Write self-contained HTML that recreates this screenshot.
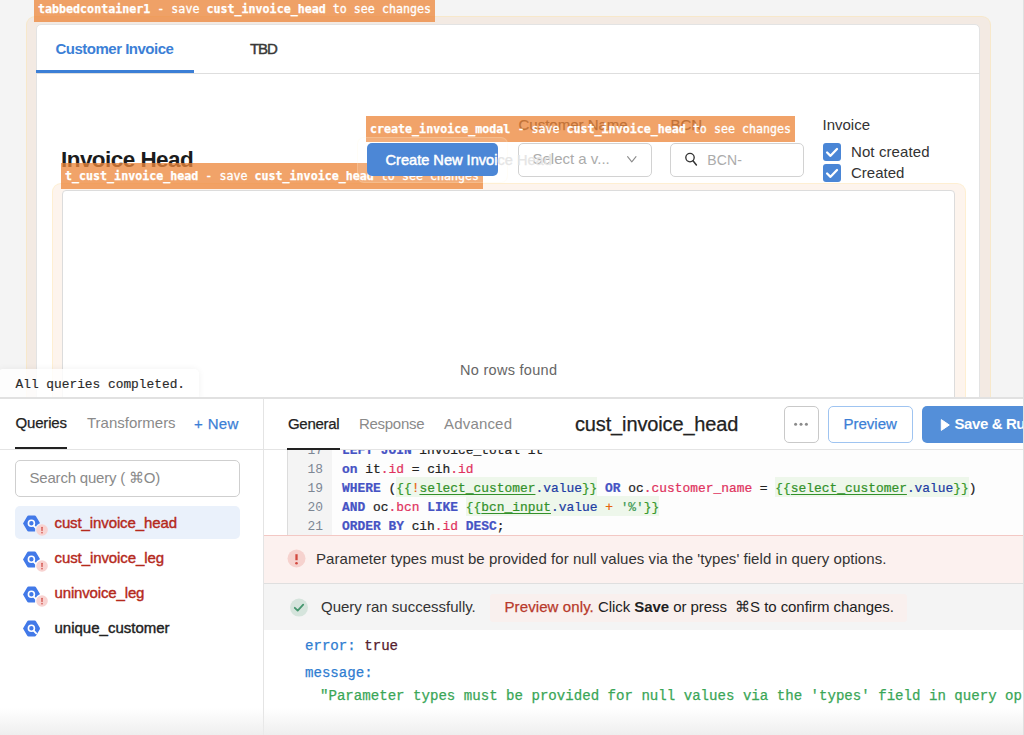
<!DOCTYPE html>
<html lang="en">
<head>
<meta charset="utf-8">
<title>Retool - Customer Invoice</title>
<style>
*{box-sizing:border-box;margin:0;padding:0}
html,body{width:1024px;height:735px;overflow:hidden;background:#f4f4f4;font-family:"Liberation Sans",Arial,sans-serif;font-size:15px;color:#333}
.abs{position:absolute}
.t{position:absolute;white-space:pre;line-height:20px}
.med2{-webkit-text-stroke:.4px currentColor}
.med{-webkit-text-stroke:0.25px currentColor}
.mono{font-family:"Liberation Mono","DejaVu Sans Mono",monospace}

/* canvas */
#canvas{position:absolute;left:0;top:0;width:1024px;height:398px;overflow:hidden;background:#f4f4f4}
.halo{position:absolute;background:rgba(237,137,54,.09);border:1.5px solid rgba(255,225,140,.28);border-radius:9px}
#tc{position:absolute;left:36px;top:24px;width:944px;height:420px;background:#fff;border:1px solid #e3e3e3;border-radius:5px}
#tabline{position:absolute;left:36px;top:73px;width:944px;height:1px;background:#dedede}
#tabul{position:absolute;left:36px;top:70px;width:158px;height:3px;background:#3c7fd6}
.olabel{position:absolute;height:25px;background:rgba(237,135,60,.77);color:#fff;font-family:"DejaVu Sans Mono","Liberation Mono",monospace;font-size:11.66px;line-height:26px;padding:0 4px;white-space:pre}
.olabel b{font-weight:700;-webkit-text-stroke:.25px #fff}
.olabel span{-webkit-text-stroke:.3px #fff}
#table{position:absolute;left:62px;top:190px;width:893px;height:240px;background:#fff;border:1px solid #dcdcdc;border-radius:4px}
.field{position:absolute;top:142.5px;height:34.3px;background:#fff;border:1px solid #d2d2d2;border-radius:5px}
.cb{position:absolute;left:823px;width:18px;height:18px;border-radius:3px;background:#4a86d6}
.cb svg{position:absolute;left:0;top:0}
#btn{position:absolute;left:367px;top:143px;width:131px;height:33px;border-radius:5px;background:#4c87d6;overflow:hidden}
#status{position:absolute;left:-2px;top:368.5px;width:200.5px;height:30px;background:rgba(255,255,255,.82);border-radius:5px 5px 0 0;box-shadow:0 0 7px rgba(0,0,0,.06)}

/* bottom panel */
#panel{position:absolute;left:0;top:398px;width:1024px;height:337px;background:#fff;overflow:hidden}
#left{position:absolute;left:0;top:0;width:264px;height:338px;border-right:1px solid #e4e4e4}
.hline{position:absolute;height:1px;background:#e4e4e4}
.ul{position:absolute;height:2.6px;background:#222}
.hbtn{position:absolute;top:8px;height:37px;border-radius:5px;background:#fff}
.qi{position:absolute;left:0;width:263px;height:35px}
.qi svg{position:absolute;left:20px;top:5.2px}
.qi .t{left:54.5px;top:6.5px}
.red{color:#b5291c}
#code{position:absolute;left:287px;top:52px;width:737px;height:86px;background:#fdfdfd;overflow:hidden}
#gutter{position:absolute;left:0;top:0;width:45px;height:100px;background:#f4f4f4}
.cl{position:absolute;left:0;height:19px;line-height:19px;font-family:"Liberation Mono","DejaVu Sans Mono",monospace;font-size:12.9px;white-space:pre;color:#222;-webkit-text-stroke:.22px currentColor}
.cl .n{position:absolute;left:0;width:36px;text-align:right;color:#7d8794;-webkit-text-stroke:0}
.cl .c{position:absolute;left:55px}
.k{color:#4653c4;font-weight:700}
.p{color:#e0335e}
.g{color:#3a9a2d}
.v{color:#33912a;text-decoration:underline;text-decoration-thickness:1.3px;text-underline-offset:2.3px;text-decoration-skip-ink:none}
.b{color:#1d3ca3}
.o{color:#e8640c}
.s{color:#3d9a55}
.hl{background:#eef7eb;padding:4px 0 1px}
#err{position:absolute;left:264px;top:137px;width:760px;height:48px;background:#fcf1ef;border-top:1px solid #f3c8c4}
#ok{position:absolute;left:264px;top:185px;width:760px;height:47px;background:#f4f4f4;border-top:1px solid #dfdfdf}
#pv{position:absolute;left:226.3px;top:9.5px;width:417px;height:28px;background:#f9f0ee;border-radius:3px}
.out{position:absolute;font-family:"Liberation Mono","DejaVu Sans Mono",monospace;font-size:14.1px;line-height:20px;white-space:pre;-webkit-text-stroke:.25px currentColor}
#fade{position:absolute;left:0;top:310px;width:1024px;height:28px;background:linear-gradient(to bottom,rgba(236,236,236,0),rgba(236,236,236,.9))}
#redge{position:absolute;left:1022.6px;top:0;width:1.4px;height:735px;background:#e0e0e0}
</style>
</head>
<body>
<div id="canvas">
  <!-- tabbed container -->
  <div class="halo" style="left:25.5px;top:16px;width:965.5px;height:440px"></div>
  <div id="tc"></div>
  <div id="tabline"></div>
  <div id="tabul"></div>
  <div class="t" style="left:55.5px;top:38.8px;color:#3c7fd6;font-weight:700;letter-spacing:-.5px">Customer Invoice</div>
  <div class="t" style="left:250px;top:38.8px;color:#383838;letter-spacing:-1.1px;-webkit-text-stroke:.45px #383838">TBD</div>

  <div class="t" style="left:61px;top:145.5px;font-size:22.5px;font-weight:700;color:#1c1c1c;line-height:28px;letter-spacing:-.55px">Invoice Head</div>

  <!-- table -->
  <div class="halo" style="left:51.5px;top:183px;width:914.5px;height:260px"></div>
  <div id="table"></div>
  <div class="t" style="left:460px;top:359.5px;font-size:14.5px;color:#666;letter-spacing:.29px">No rows found</div>

  <!-- labels of fields -->
  <div class="t" style="left:518.5px;top:114.8px;color:#2e2e2e;-webkit-text-stroke:.25px #2e2e2e">Customer Name</div>
  <div class="t" style="left:670.5px;top:114.8px;color:#2e2e2e;-webkit-text-stroke:.25px #2e2e2e">BCN</div>
  <div class="t" style="left:822.5px;top:114.5px;color:#333">Invoice</div>

  <!-- select -->
  <div class="field" style="left:518px;width:133.5px"></div>
  <div class="t" style="left:532.5px;top:148.7px;color:#ababab">Select a v...</div>
  <svg class="abs" style="left:625px;top:153px" width="14" height="12" viewBox="0 0 14 12"><path d="M2.6 3.7 L6.8 8.9 L11 3.7" fill="none" stroke="#8c8c8c" stroke-width="1.1" stroke-linecap="round" stroke-linejoin="round"/></svg>

  <!-- input -->
  <div class="field" style="left:670px;width:133.5px"></div>
  <svg class="abs" style="left:683px;top:152px" width="16" height="16" viewBox="0 0 16 16"><circle cx="7" cy="5.6" r="4.2" fill="none" stroke="#333" stroke-width="1.35"/><path d="M10 8.8 L13.4 13" stroke="#333" stroke-width="1.5" stroke-linecap="round"/></svg>
  <div class="t" style="left:707.3px;top:150.1px;color:#ababab;font-size:14px;letter-spacing:.15px">BCN-</div>

  <!-- checkboxes -->
  <div class="cb" style="top:143px"><svg width="18" height="18" viewBox="0 0 18 18"><path d="M4.1 9.5 L7.5 12.8 L14 6" fill="none" stroke="#fff" stroke-width="2.3" stroke-linecap="round" stroke-linejoin="round"/></svg></div>
  <div class="cb" style="top:164px"><svg width="18" height="18" viewBox="0 0 18 18"><path d="M4.1 9.5 L7.5 12.8 L14 6" fill="none" stroke="#fff" stroke-width="2.3" stroke-linecap="round" stroke-linejoin="round"/></svg></div>
  <div class="t" style="left:851px;top:142px;color:#333;letter-spacing:.1px">Not created</div>
  <div class="t" style="left:851px;top:163px;color:#333">Created</div>

  <!-- orange labels -->
  <div class="olabel" style="left:34px;top:-4px;height:26px"><b>tabbedcontainer1</b><span> - save </span><b>cust_invoice_head</b><span> to see changes</span></div>
  <div class="olabel" style="left:61px;top:163px;height:25.6px"><b>t_cust_invoice_head</b><span> - save </span><b>cust_invoice_head</b><span> to see changes</span></div>
  <div class="olabel" style="left:366px;top:116px;height:25.6px"><b>create_invoice_modal</b><span> - save </span><b>cust_invoice_head</b><span> to see changes</span></div>

  <!-- create button with halo -->
  <div class="abs" style="left:357px;top:136.5px;width:151px;height:46.5px;border:1.5px solid rgba(255,246,215,.2);border-radius:7px;background:rgba(255,255,255,.12)"></div>
  <div class="t med" style="left:385.5px;top:149.5px;font-size:14.6px;color:#e5e5e5">Create New Invoice Head</div>
  <div id="btn"><div class="t" style="left:18.5px;top:6.5px;font-size:14.6px;color:#fff;-webkit-text-stroke:.5px #fff">Create New Invoice Head</div></div>

  <div id="status"><div class="t mono" style="left:17.5px;top:6.5px;font-size:12.85px;color:#2a2a2a;-webkit-text-stroke:.15px #2a2a2a">All queries completed.</div></div>
</div>

<div id="panel">
  <div id="left"></div>
  <div class="hline" style="left:0;top:51px;width:1024px"></div>

  <!-- left header -->
  <div class="t med" style="left:15.5px;top:15px;color:#222;letter-spacing:-.17px">Queries</div>
  <div class="ul" style="left:15px;top:48.5px;width:52px"></div>
  <div class="t" style="left:87px;top:15px;color:#8a8a8a">Transformers</div>
  <div class="t med" style="left:194px;top:15.5px;color:#3c7fd6;letter-spacing:.35px">+ New</div>

  <!-- search -->
  <div class="abs" style="left:15px;top:62px;width:224.5px;height:36.6px;border:1px solid #cfcfcf;border-radius:5px;background:#fff"></div>
  <div class="t" style="left:29.5px;top:70px;color:#8a8a8a;letter-spacing:-.2px">Search query ( ⌘O)</div>

  <!-- query list -->
  <div class="abs" style="left:15px;top:108.4px;width:224.5px;height:32.3px;background:#eaf1fb;border-radius:5px"></div>
  <div class="qi" style="top:108px">
    <svg width="32" height="26" viewBox="0 0 32 26"><path d="M3 12.5 L7.1 5.4 Q7.6 4.5 8.6 4.5 L14.6 4.5 Q15.6 4.5 16.1 5.4 L19.7 11.6 Q20.2 12.5 19.7 13.4 L16.1 19.6 Q15.6 20.5 14.6 20.5 L8.6 20.5 Q7.6 20.5 7.1 19.6 Z" fill="#4279e8"/><circle cx="11.4" cy="12.2" r="3" fill="none" stroke="#fff" stroke-width="1.6"/><path d="M13.6 14.6 L16.2 17.4" stroke="#fff" stroke-width="1.8" stroke-linecap="round"/><circle cx="22" cy="19" r="7" fill="#eaf1fb"/><circle cx="22" cy="19" r="5.8" fill="#f8d3d1"/><path d="M22 16.3 L22 19.6" stroke="#d04a44" stroke-width="1.25" stroke-linecap="round"/><circle cx="22" cy="21.8" r=".8" fill="#d04a44"/></svg>
    <div class="t med2 red" style="letter-spacing:-.11px">cust_invoice_head</div>
  </div>
  <div class="qi" style="top:143px">
    <svg style="top:5.9px" width="32" height="26" viewBox="0 0 32 26"><path d="M3 12.5 L7.1 5.4 Q7.6 4.5 8.6 4.5 L14.6 4.5 Q15.6 4.5 16.1 5.4 L19.7 11.6 Q20.2 12.5 19.7 13.4 L16.1 19.6 Q15.6 20.5 14.6 20.5 L8.6 20.5 Q7.6 20.5 7.1 19.6 Z" fill="#4279e8"/><circle cx="11.4" cy="12.2" r="3" fill="none" stroke="#fff" stroke-width="1.6"/><path d="M13.6 14.6 L16.2 17.4" stroke="#fff" stroke-width="1.8" stroke-linecap="round"/><circle cx="22" cy="19" r="7" fill="#fff"/><circle cx="22" cy="19" r="5.8" fill="#f8d3d1"/><path d="M22 16.3 L22 19.6" stroke="#d04a44" stroke-width="1.25" stroke-linecap="round"/><circle cx="22" cy="21.8" r=".8" fill="#d04a44"/></svg>
    <div class="t med2 red" style="letter-spacing:-.09px">cust_invoice_leg</div>
  </div>
  <div class="qi" style="top:178px">
    <svg style="top:5.9px" width="32" height="26" viewBox="0 0 32 26"><path d="M3 12.5 L7.1 5.4 Q7.6 4.5 8.6 4.5 L14.6 4.5 Q15.6 4.5 16.1 5.4 L19.7 11.6 Q20.2 12.5 19.7 13.4 L16.1 19.6 Q15.6 20.5 14.6 20.5 L8.6 20.5 Q7.6 20.5 7.1 19.6 Z" fill="#4279e8"/><circle cx="11.4" cy="12.2" r="3" fill="none" stroke="#fff" stroke-width="1.6"/><path d="M13.6 14.6 L16.2 17.4" stroke="#fff" stroke-width="1.8" stroke-linecap="round"/><circle cx="22" cy="19" r="7" fill="#fff"/><circle cx="22" cy="19" r="5.8" fill="#f8d3d1"/><path d="M22 16.3 L22 19.6" stroke="#d04a44" stroke-width="1.25" stroke-linecap="round"/><circle cx="22" cy="21.8" r=".8" fill="#d04a44"/></svg>
    <div class="t med2 red" style="letter-spacing:-.15px">uninvoice_leg</div>
  </div>
  <div class="qi" style="top:213px">
    <svg style="top:5.4px" width="32" height="26" viewBox="0 0 32 26"><path d="M3 12.5 L7.1 5.4 Q7.6 4.5 8.6 4.5 L14.6 4.5 Q15.6 4.5 16.1 5.4 L19.7 11.6 Q20.2 12.5 19.7 13.4 L16.1 19.6 Q15.6 20.5 14.6 20.5 L8.6 20.5 Q7.6 20.5 7.1 19.6 Z" fill="#4279e8"/><circle cx="11.4" cy="12.2" r="3" fill="none" stroke="#fff" stroke-width="1.6"/><path d="M13.6 14.6 L16.2 17.4" stroke="#fff" stroke-width="1.8" stroke-linecap="round"/></svg>
    <div class="t med2" style="color:#222;top:7px">unique_customer</div>
  </div>

  <!-- right header -->
  <div class="t med" style="left:288px;top:15.5px;color:#222;letter-spacing:-.3px">General</div>
  <div class="ul" style="left:287px;top:49.5px;width:53px"></div>
  <div class="t" style="left:359px;top:15.5px;color:#8a8a8a;letter-spacing:-.29px">Response</div>
  <div class="t" style="left:444px;top:15.5px;color:#8a8a8a;letter-spacing:.18px">Advanced</div>
  <div class="t med" style="left:575px;top:13px;font-size:20px;line-height:26px;color:#222;letter-spacing:-.14px">cust_invoice_head</div>

  <div class="hbtn" style="left:783.5px;width:35px;border:1px solid #c9c9c9"></div>
  <svg class="abs" style="left:792px;top:22px" width="18" height="8" viewBox="0 0 18 8"><circle cx="3.6" cy="4.2" r="1.5" fill="#8a8a8a"/><circle cx="9" cy="4.2" r="1.5" fill="#8a8a8a"/><circle cx="14.4" cy="4.2" r="1.5" fill="#8a8a8a"/></svg>
  <div class="hbtn" style="left:828px;width:84.5px;border:1px solid #9fc4f1"></div>
  <div class="t med" style="left:843.5px;top:15.5px;color:#3c7fd6">Preview</div>
  <div class="hbtn" style="left:922px;width:120px;background:#548fd9"></div>
  <svg class="abs" style="left:940px;top:20px" width="11" height="14" viewBox="0 0 11 14"><path d="M1.3 1.6 L9.3 7 L1.3 12.4 Z" fill="#fff" stroke="#fff" stroke-width="1" stroke-linejoin="round"/></svg>
  <div class="t" style="left:954.5px;top:15.5px;color:#fff;font-weight:700;letter-spacing:-.4px">Save &amp; Run</div>

  <!-- code -->
  <div id="code">
    <div id="gutter"></div>
    <div class="cl" style="top:-9px"><span class="n">17</span><span class="c"><span class="k">LEFT JOIN</span> invoice_total it</span></div>
    <div class="cl" style="top:10px"><span class="n">18</span><span class="c"><span class="k">on</span> it<span class="p">.id</span> = cih<span class="p">.id</span></span></div>
    <div class="cl" style="top:29px"><span class="n">19</span><span class="c"><span class="k">WHERE</span> (<span class="hl"><span class="g">{{</span><span class="o">!</span><span class="v">select_customer</span><span class="b">.value</span><span class="g">}}</span></span> <span class="k">OR</span> oc<span class="p">.customer_name</span> = <span class="hl"><span class="g">{{</span><span class="v">select_customer</span><span class="b">.value</span><span class="g">}}</span></span>)</span></div>
    <div class="cl" style="top:48px"><span class="n">20</span><span class="c"><span class="k">AND</span> oc<span class="p">.bcn</span> <span class="k">LIKE</span> <span class="hl"><span class="g">{{</span><span class="v">bcn_input</span><span class="b">.value</span> <span class="o">+</span> <span class="s">'%'</span><span class="g">}}</span></span></span></div>
    <div class="cl" style="top:67px"><span class="n">21</span><span class="c"><span class="k">ORDER BY</span> cih<span class="p">.id</span> <span class="k">DESC</span>;</span></div>
  </div>
  <div class="abs" style="left:286.5px;top:52px;width:1px;height:86px;background:#dcdcdc"></div>

  <!-- error bar -->
  <div id="err">
    <svg class="abs" style="left:23px;top:13px" width="20" height="20" viewBox="0 0 20 20"><circle cx="9.5" cy="9.5" r="9" fill="#f6d2ce"/><path d="M9.5 5.2 L9.5 11.2" stroke="#d2493f" stroke-width="2.3" stroke-linecap="butt"/><circle cx="9.5" cy="14.2" r="1.3" fill="#d2493f"/></svg>
    <div class="t" style="left:52px;top:12.5px;color:#333;letter-spacing:.05px">Parameter types must be provided for null values via the 'types' field in query options.</div>
  </div>
  <!-- success bar -->
  <div id="ok">
    <div id="pv"></div>
    <svg class="abs" style="left:25px;top:14px" width="20" height="20" viewBox="0 0 20 20"><circle cx="10" cy="9.6" r="9" fill="#d5e4dc"/><path d="M5.8 9.8 L8.7 12.6 L14.2 6.6" fill="none" stroke="#45966e" stroke-width="1.8" stroke-linecap="round" stroke-linejoin="round"/></svg>
    <div class="t" style="left:57px;top:12.5px;color:#333">Query ran successfully.</div>
    <div class="t" style="left:240.5px;top:12.5px;color:#222;letter-spacing:-.06px"><span class="med" style="color:#b83a2b;letter-spacing:.1px">Preview only.</span> Click <b>Save</b> or press  ⌘S to confirm changes.</div>
  </div>

  <!-- output -->
  <div class="out" style="left:305px;top:238px"><span style="color:#2f7dd1">error:</span> <span style="color:#55202e">true</span></div>
  <div class="out" style="left:305px;top:265px"><span style="color:#2f7dd1">message:</span></div>
  <div class="out" style="left:320px;top:288px;color:#3aa657">"Parameter types must be provided for null values via the 'types' field in query options."</div>

  <div id="fade"></div>
</div>
<div class="abs" style="left:0;top:397px;width:1024px;height:1.7px;background:#e1e1e1"></div>
<div id="redge"></div>
</body>
</html>
